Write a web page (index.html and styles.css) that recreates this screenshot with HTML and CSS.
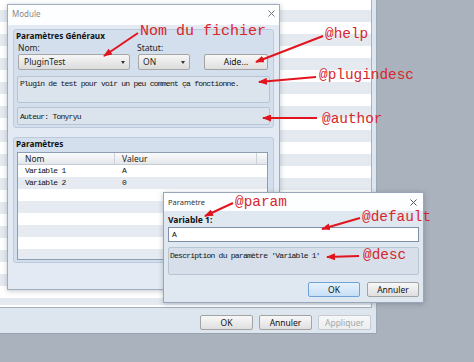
FILE: index.html
```html
<!DOCTYPE html>
<html lang="fr">
<head>
<meta charset="utf-8">
<title>Module</title>
<link rel="stylesheet" href="styles.css">
</head>
<body>
<div class="desktop">
  <div class="backwin">
    <div class="list"></div>
    <div class="footer">
      <button class="btn">OK</button>
      <button class="btn">Annuler</button>
      <button class="btn disabled">Appliquer</button>
    </div>
  </div>

  <div class="win module">
    <div class="titlebar">
      <span class="title">Module</span>
      <svg class="close" width="7" height="7" viewBox="0 0 7 7"><path d="M0.5 0.5L6.5 6.5M6.5 0.5L0.5 6.5" stroke="#6f6f6f" stroke-width="1"/></svg>
    </div>
    <div class="win-body">
      <section class="group general">
        <h2>Paramètres Généraux</h2>
        <div class="fields">
          <div class="field f-nom"><label>Nom:</label><div class="combo"><span>PluginTest</span><span class="caret"></span></div></div>
          <div class="field f-statut"><label>Statut:</label><div class="combo"><span>ON</span><span class="caret"></span></div></div>
          <button class="btn aide">Aide...</button>
        </div>
        <div class="box desc mono">Plugin de test pour voir un peu comment ça fonctionne.</div>
        <div class="box author mono">Auteur: Tonyryu</div>
      </section>
      <section class="group params">
        <h2>Paramètres</h2>
        <div class="table">
          <div class="thead"><span class="c1">Nom</span><span class="c2">Valeur</span><span class="c3"></span></div>
          <div class="tbody mono">
            <div class="row"><span class="c1">Variable 1</span><span class="c2">A</span></div>
            <div class="row"><span class="c1">Variable 2</span><span class="c2">0</span></div>
          </div>
        </div>
      </section>
    </div>
  </div>

  <div class="win dialog">
    <div class="titlebar">
      <span class="title">Paramètre</span>
      <svg class="close" width="7" height="7" viewBox="0 0 7 7"><path d="M0.5 0.5L6.5 6.5M6.5 0.5L0.5 6.5" stroke="#555" stroke-width="1"/></svg>
    </div>
    <div class="win-body">
      <div class="var-label">Variable 1:</div>
      <div class="input mono">A</div>
      <div class="box desc2 mono">Description du paramètre 'Variable 1'</div>
      <div class="dlg-buttons">
        <button class="btn default">OK</button>
        <button class="btn">Annuler</button>
      </div>
    </div>
  </div>

  <svg class="arrows" width="474" height="362" viewBox="0 0 474 362">
    <defs>
      <marker id="ah" markerUnits="userSpaceOnUse" markerWidth="9" markerHeight="7" refX="8" refY="3.5" orient="auto">
        <path d="M0 0L9 3.5L0 7Z" fill="#e2141d"/>
      </marker>
    </defs>
    <g stroke="#e2141d" stroke-width="2" fill="none" marker-end="url(#ah)">
      <line x1="138" y1="33" x2="104" y2="56"/>
      <line x1="323" y1="36" x2="256" y2="62"/>
      <line x1="316" y1="77" x2="259" y2="82"/>
      <line x1="317" y1="118" x2="263" y2="118"/>
      <line x1="233" y1="203" x2="205" y2="216"/>
      <line x1="360" y1="218" x2="322" y2="229"/>
      <line x1="359" y1="256" x2="327" y2="257"/>
    </g>
  </svg>

  <span class="note n-nom">Nom du fichier</span>
  <span class="note n-help">@help</span>
  <span class="note n-plugindesc">@plugindesc</span>
  <span class="note n-author">@author</span>
  <span class="note n-param">@param</span>
  <span class="note n-default">@default</span>
  <span class="note n-desc">@desc</span>
</div>
</body>
</html>
```

FILE: styles.css
```css
* { box-sizing: border-box; }
html, body { margin: 0; padding: 0; }
body {
  width: 474px;
  height: 362px;
  overflow: hidden;
  background: #aab2bd;
  font-family: "Noto Sans", "Liberation Sans", sans-serif;
  font-size: 8.5px;
  color: #1e1e1e;
}
.desktop { position: relative; width: 474px; height: 362px; }

/* background window */
.backwin {
  width: 377px;
  height: 334px;
  background: #dde5ee;
  border-right: 1px solid #9da8b5;
  border-bottom: 1px solid #99a3af;
  display: flex;
  flex-direction: column;
}
.list {
  flex: none;
  width: 372px;
  height: 308px;
  border-right: 1px solid #a7b3c1;
  border-bottom: 1px solid #a3aebb;
  background: repeating-linear-gradient(to bottom, #ffffff 0 12px, #e5eaf1 12px 24px);
  background-position: 0 -2px;
}
.footer {
  display: flex;
  justify-content: flex-end;
  gap: 6px;
  padding: 7px 5px 0 0;
}
.btn {
  font: inherit;
  width: 53px;
  height: 15px;
  padding: 0;
  border: 1px solid #a3a3a3;
  border-radius: 2px;
  background: linear-gradient(#f8f8f8, #dfdfdf);
  color: #111;
  line-height: 13px;
  text-align: center;
}
.btn.disabled {
  color: #a4a7aa;
  border-color: #c7cbd0;
  background: linear-gradient(#f6f7f8, #eceef0);
}
.btn.default {
  background: linear-gradient(#e6f2fd, #c7dff6);
  border-color: #6fa3d8;
}

/* windows */
.win {
  position: absolute;
  border: 1px solid #9fadbd;
  box-shadow: 0 1px 5px rgba(40, 50, 70, 0.28);
  display: flex;
  flex-direction: column;
}
.titlebar {
  flex: none;
  display: flex;
  align-items: center;
  justify-content: space-between;
  background: #fdfeff;
}
.win-body { flex: 1; display: flex; flex-direction: column; }

.module { left: 7px; top: 4px; width: 273px; height: 286px; background: #e3eaf3; }
.module .titlebar {
  height: 20px;
  padding: 0 4px 3px 4px;
  color: #888;
  font-size: 8px;
}
.module .win-body { padding: 4px 5px 0 5px; }

.group {
  flex: none;
  background: #d3dfec;
  border: 1px solid #bccbdb;
  border-radius: 3px;
  padding: 0 3px 2px 2px;
  display: flex;
  flex-direction: column;
}
.group h2 {
  margin: 0;
  font-size: 8.2px;
  font-weight: bold;
  line-height: 11px;
  color: #111;
}
.general { height: 99px; }
.fields { display: flex; align-items: flex-end; margin-top: 1px; }
.field { display: flex; flex-direction: column; }
.field label { height: 12px; line-height: 12px; }
.f-nom { margin-left: 2px; width: 112px; }
.f-statut { margin-left: 7px; width: 53px; }
.f-statut .combo { margin-left: 1px; width: 52px; padding-left: 4px; }
.combo {
  height: 16px;
  border: 1px solid #a7a7a7;
  border-radius: 2px;
  background: linear-gradient(#f6f6f6, #dcdcdc);
  display: flex;
  align-items: center;
  justify-content: space-between;
  padding: 0 4px 0 5px;
  line-height: 14px;
}
.caret {
  width: 0;
  height: 0;
  border-left: 2.5px solid transparent;
  border-right: 2.5px solid transparent;
  border-top: 3px solid #333;
}
.aide { margin-left: 14px; width: 64px; height: 16px; line-height: 14px; }

.box {
  background: #dbe3ed;
  border: 1px solid #b7c4d3;
  border-radius: 2px;
  margin-left: 1px;
}
.desc { margin-top: 6px; height: 27px; padding: 1px 2px; }
.author { margin-top: 4px; height: 18px; padding: 3px 2px 0; }
.mono {
  font-family: "Liberation Mono", "DejaVu Sans Mono", monospace;
  font-size: 8px;
  letter-spacing: -0.75px;
  line-height: 11px;
  color: #141414;
}

.params { margin-top: 9px; height: 126px; }
.table {
  flex: 1;
  margin: 3px 2px 0 1px;
  border: 1px solid #8d9eb3;
  background: #fff;
  display: flex;
  flex-direction: column;
}
.thead {
  flex: none;
  height: 12px;
  display: flex;
  line-height: 11px;
  background: linear-gradient(#fafbfc, #e4e7ea);
  border-bottom: 1px solid #c6ccd3;
}
.c1 { width: 97px; padding-left: 7px; border-right: 1px solid #cdd2d8; }
.c2 { flex: 1; padding-left: 7px; border-right: 1px solid #cdd2d8; }
.c3 { width: 10px; }
.tbody {
  flex: 1;
  background: repeating-linear-gradient(to bottom, #ffffff 0 12px, #e6ebf1 12px 24px);
}
.row { display: flex; height: 12px; line-height: 12px; }
.row .c1, .row .c2 { border-right-color: transparent; }

/* parameter dialog */
.dialog { left: 163px; top: 192px; width: 261px; height: 111px; background: #dfe7f0; border-color: #97a6b8; }
.dialog .titlebar { height: 18px; padding: 0 6px 0 4px; font-size: 7.5px; color: #333; }
.dialog .win-body { padding: 0 4px; }
.var-label { margin-top: 3px; font-weight: bold; line-height: 11px; color: #111; }
.input {
  margin-top: 2px;
  height: 15px;
  border: 1px solid #7d90a8;
  background: #fff;
  padding: 0 3px;
  line-height: 13px;
}
.desc2 { margin: 5px 0 0 0; height: 28px; padding: 2px 1px; background: #d6dfea; }
.dlg-buttons { display: flex; justify-content: flex-end; gap: 7px; margin-top: 7px; }
.dlg-buttons .btn { width: 52px; }

/* annotations */
.arrows { position: absolute; left: 0; top: 0; pointer-events: none; }
.note {
  position: absolute;
  font-family: "Liberation Mono", "Courier New", monospace;
  color: #d8262e;
  font-size: 14.4px;
  line-height: 15px;
  white-space: nowrap;
}
.n-nom { left: 140px; top: 24px; font-size: 15px; line-height: 16px; }
.n-help { left: 325px; top: 27px; }
.n-plugindesc { left: 319px; top: 68px; }
.n-author { left: 322px; top: 112px; }
.n-param { left: 235px; top: 195px; }
.n-default { left: 362px; top: 210px; }
.n-desc { left: 363px; top: 248px; }
```
